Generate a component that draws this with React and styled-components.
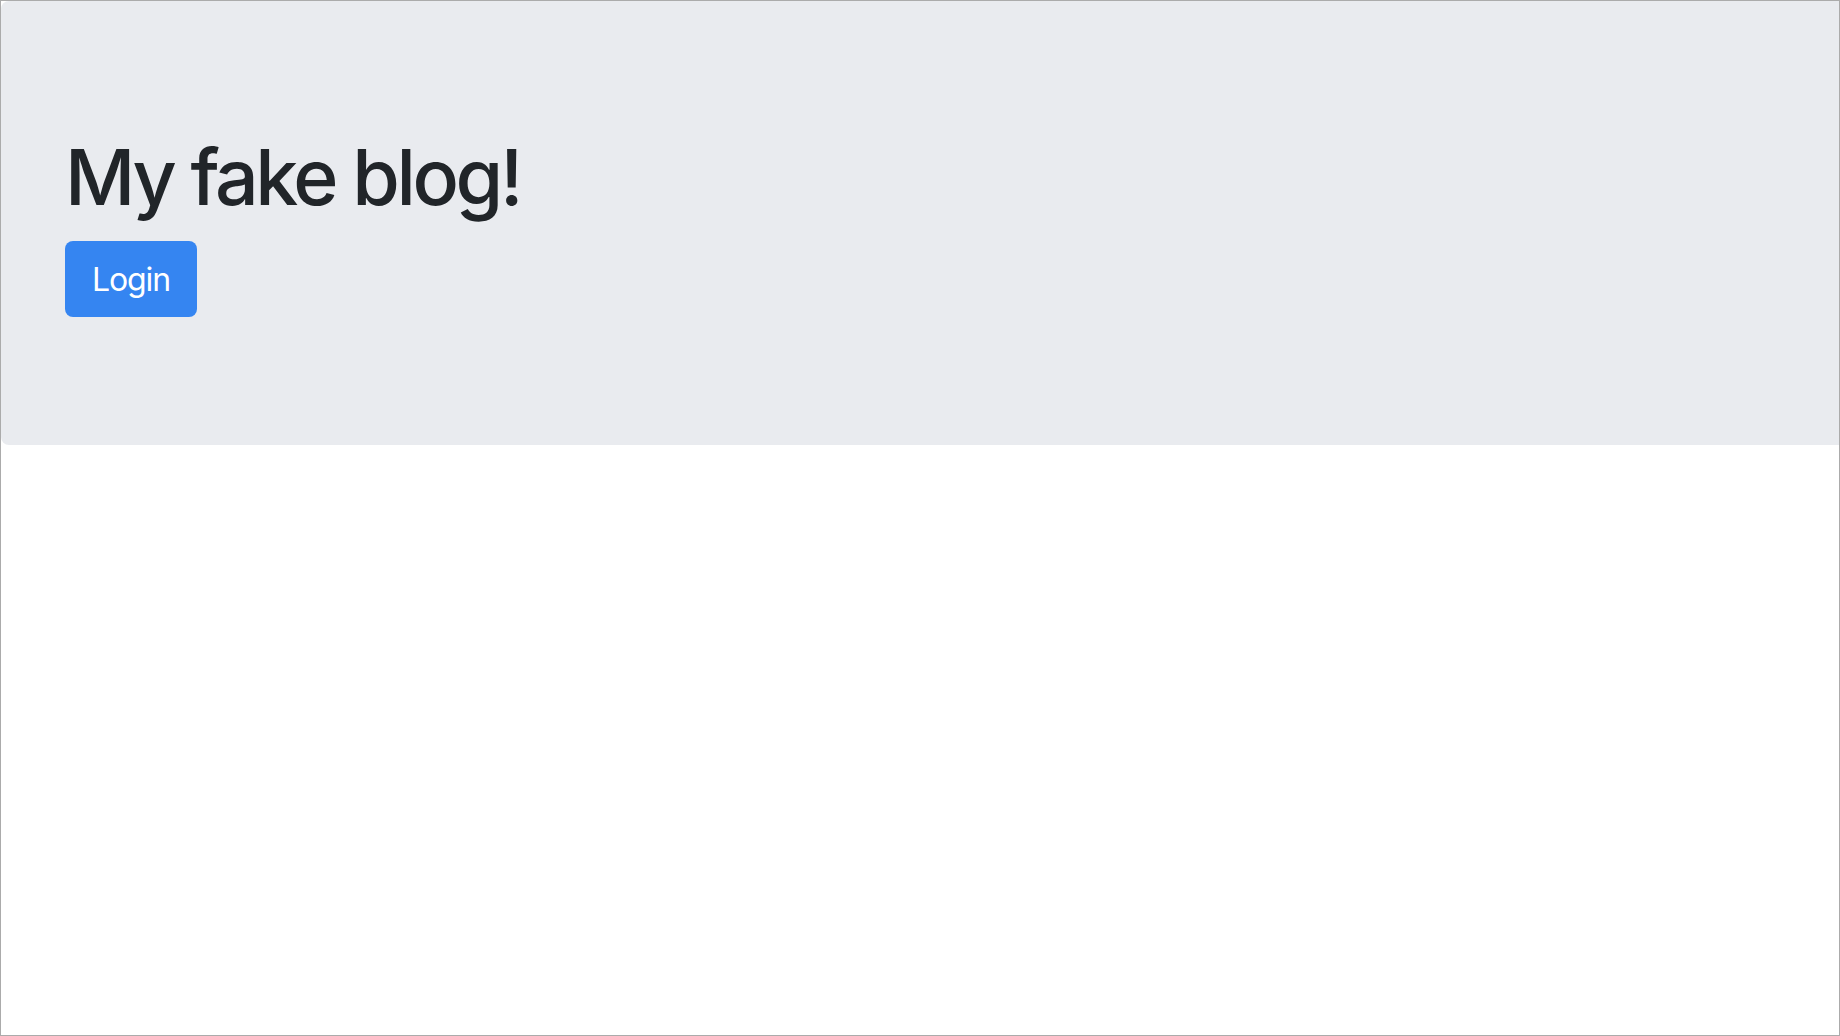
import React from "react";
import styled, { createGlobalStyle } from "styled-components";

const Global = createGlobalStyle`
  html, body { margin: 0; padding: 0; background: #ffffff; }
  body { font-family: Inter, "Noto Sans", "Liberation Sans", sans-serif; }
  * { box-sizing: border-box; }
`;

const Frame = styled.div`
  width: 1840px;
  height: 1036px;
  border: 1px solid #ababab;
  background: #ffffff;
  overflow: hidden;
`;

const Jumbotron = styled.header`
  background: #e9ebef;
  border-radius: 8px 0 0 8px;
  padding: 130px 64px 128px;
  display: flex;
  flex-direction: column;
  align-items: flex-start;
`;

const Title = styled.h1`
  margin: 0 0 18px;
  font-family: Inter, "Noto Sans", "Liberation Sans", sans-serif;
  font-size: 77px;
  font-weight: 500;
  line-height: 1.2;
  color: #212529;
  letter-spacing: -0.044em;
`;

const Button = styled.button`
  height: 76px;
  padding: 0 27px;
  border: none;
  border-radius: 8px;
  background: #3585f1;
  color: #ffffff;
  font-family: Inter, "Noto Sans", "Liberation Sans", sans-serif;
  font-size: 32px;
  font-weight: 400;
  letter-spacing: -0.035em;
  cursor: pointer;
`;

export default function App() {
  return (
    <>
      <Global />
      <Frame>
        <Jumbotron>
          <Title>My fake blog!</Title>
          <Button>Login</Button>
        </Jumbotron>
      </Frame>
    </>
  );
}
